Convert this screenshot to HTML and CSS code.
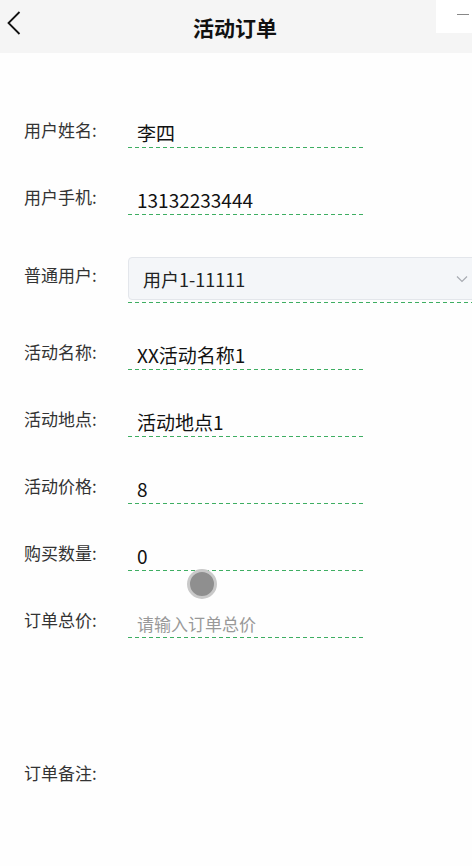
FILE: index.html
```
<!DOCTYPE html>
<html lang="zh">

<head>
    <meta charset="utf-8">
    <meta name="viewport" content="width=device-width, initial-scale=1.0">
    <title>活动订单</title>
    <link rel="stylesheet" href="styles.css">
</head>

<body>

    <header class="topbar">
        <a class="tilbage" href="#">
            <svg width="16" height="24" viewBox="0 0 16 24">
                <path d="M13.5 1 L2.5 12 L13.5 23" fill="none" stroke="#111" stroke-width="1.8" />
            </svg>
        </a>
        <h1>活动订单</h1>
        <div class="kapsel"><span></span></div>
    </header>

    <form class="ordre">
        <div class="felt">
            <label>用户姓名:</label>
            <div class="input">李四</div>
        </div>
        <div class="felt">
            <label>用户手机:</label>
            <div class="input">13132233444</div>
        </div>
        <div class="felt vaelg">
            <label>普通用户:</label>
            <div class="select">
                <div class="boks">
                    <span>用户1-11111</span>
                    <svg width="12" height="8" viewBox="0 0 12 8">
                        <path d="M1 1.5 L6 6.5 L11 1.5" fill="none" stroke="#a8abb2" stroke-width="1.2" />
                    </svg>
                </div>
            </div>
        </div>
        <div class="felt">
            <label>活动名称:</label>
            <div class="input">XX活动名称1</div>
        </div>
        <div class="felt">
            <label>活动地点:</label>
            <div class="input">活动地点1</div>
        </div>
        <div class="felt">
            <label>活动价格:</label>
            <div class="input">8</div>
        </div>
        <div class="felt">
            <label>购买数量:</label>
            <div class="input">0</div>
        </div>
        <div class="felt">
            <label>订单总价:</label>
            <div class="input tom">请输入订单总价</div>
        </div>
        <div class="felt note">
            <label>订单备注:</label>
        </div>
    </form>

    <div class="touch"></div>

</body>

</html>
```

FILE: styles.css
```
* {
    box-sizing: border-box;
}

body {
    margin: 0;
    background-color: #fefefe;
    font-family: "Noto Sans CJK SC", "Noto Sans", sans-serif;
    color: #222;
}

.topbar {
    position: relative;
    height: 53px;
    background-color: #f5f5f5;
    display: flex;
    align-items: center;
    justify-content: center;
}

.tilbage {
    position: absolute;
    left: 6px;
    top: 11px;
}

h1 {
    margin: 0;
    font-size: 21px;
    font-weight: bold;
    color: #111;
    padding-right: 2px;
}

.kapsel {
    position: absolute;
    right: 0;
    top: 0;
    width: 36px;
    height: 33px;
    background-color: #fff;
}

.kapsel span {
    position: absolute;
    right: 3px;
    top: 14px;
    width: 12px;
    height: 1px;
    background-color: #888;
}

.ordre {
    padding-top: 65px;
    display: flex;
    flex-direction: column;
    gap: 37px;
}

.felt {
    display: flex;
    align-items: flex-start;
}

label {
    width: 128px;
    padding-left: 24px;
    font-size: 17px;
    line-height: 24px;
    color: #333;
}

.stiplet,
.input,
.select {
    background: linear-gradient(90deg, #3eae62 4px, transparent 4px) left bottom / 7px 1px repeat-x;
}

.input {
    width: 236px;
    height: 30px;
    padding: 2px 0 0 9px;
    font-size: 19px;
    line-height: 26px;
    color: #111;
}

.input.tom {
    font-size: 17px;
    color: #999;
    padding-top: 3px;
}

.vaelg {
    margin-top: 5px;
}

.vaelg label {
    margin-top: 6px;
}

.select {
    flex: 1;
    padding-bottom: 3px;
}

.boks {
    height: 43px;
    margin-right: -8px;
    border: 1px solid #e3e6eb;
    border-radius: 4px;
    background-color: #f4f6f9;
    display: flex;
    align-items: center;
    justify-content: space-between;
    padding: 0 11px 0 14px;
    font-size: 18px;
    color: #222;
}

.note {
    margin-top: 86px;
}

.touch {
    position: absolute;
    left: 187px;
    top: 569px;
    width: 30px;
    height: 30px;
    border-radius: 50%;
    background-color: #8f8f8f;
    border: 3px solid #c9c9c9;
}
```
